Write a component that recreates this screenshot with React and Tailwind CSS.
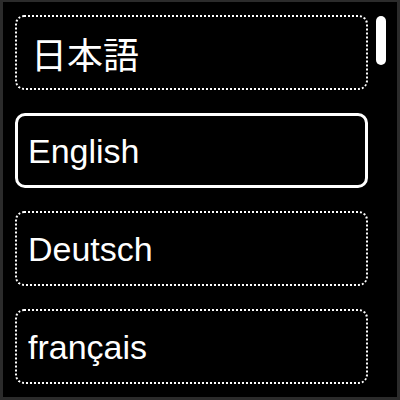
export default function App() {
  const items = [
    { label: "日本語", selected: false, cjk: true },
    { label: "English", selected: true },
    { label: "Deutsch", selected: false },
    { label: "français", selected: false },
  ];
  return (
    <div className="w-[400px] h-[400px] bg-black border-[3px] border-t-2 border-[#2b2b2b] flex pl-3 pt-[13px] gap-2 overflow-hidden">
      <div className="flex flex-col gap-[23px] w-[353px] shrink-0">
        {items.map((it) => (
          <div
            key={it.label}
            className={
              it.selected
                ? "h-[75px] shrink-0 border-[3px] border-solid border-white rounded-[10px] flex items-center pl-[10px]"
                : "h-[75px] shrink-0 border-2 border-dotted border-white rounded-[9px] flex items-center pl-[11px]"
            }
          >
            <span
              className={
                it.cjk
                  ? "text-white text-[36px] leading-none font-['Noto_Sans_CJK_JP',sans-serif] pl-[3px]"
                  : "text-white text-[34px] leading-none font-['Liberation_Sans',sans-serif]"
              }
            >
              {it.label}
            </span>
          </div>
        ))}
      </div>
      <div className="w-[10px] h-[49px] mt-px bg-white rounded-full shrink-0" />
    </div>
  );
}
